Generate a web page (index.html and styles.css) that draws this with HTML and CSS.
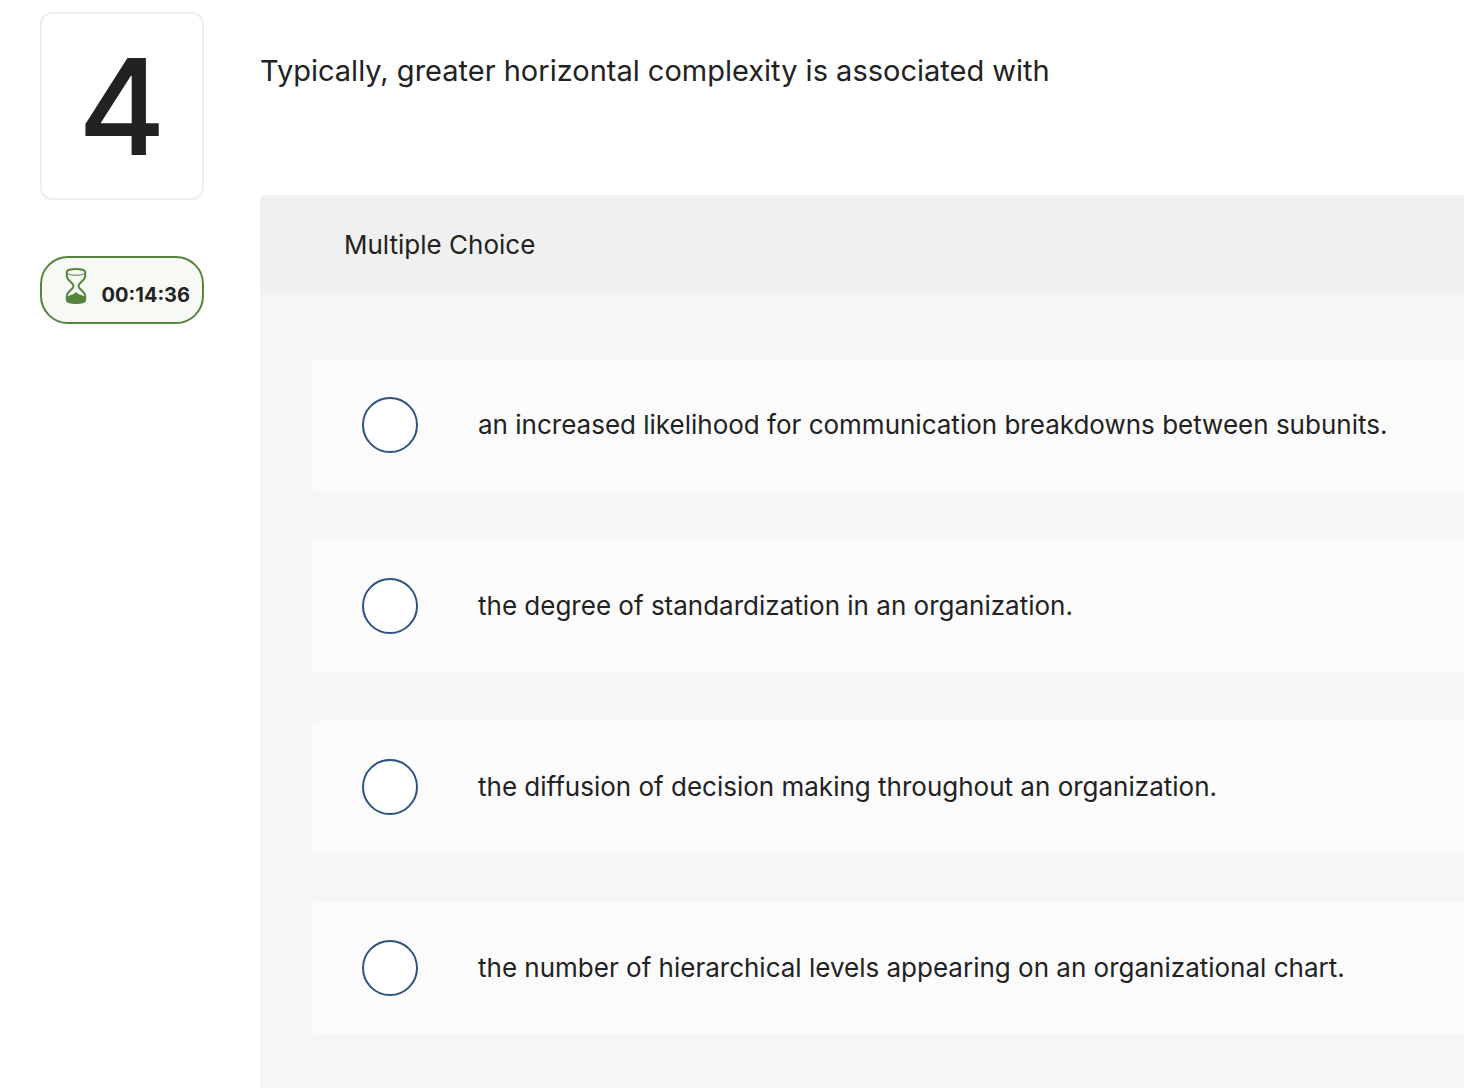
FILE: index.html
```html
<!DOCTYPE html>
<html lang="en">
<head>
<meta charset="utf-8">
<meta name="viewport" content="width=device-width, initial-scale=1">
<title>Question 4</title>
<link rel="stylesheet" href="styles.css">
</head>
<body>
<div class="page">
  <aside class="sidebar">
    <div class="number">4</div>
    <div class="timer" role="timer">
      <svg class="hourglass" viewBox="0 0 24 36" aria-hidden="true">
        <path class="outline" d="M2.8 4C2.8 2.200 7 1 12 1S21.200 2.200 21.200 4V8C21.200 12.500 14.500 14.500 14.500 18S21.200 23.500 21.200 28V32C21.200 34 17 35 12 35S2.800 34 2.800 32V28C2.800 23.500 9.500 21.500 9.500 18S2.800 12.500 2.800 8Z"/>
        <path class="rim" d="M3 5C5 8 19 8 21 5"/>
        <path class="sand" d="M3 29C6 26.500 10.500 27 12 23.500C13.500 27 18 26.500 21 29V32C21 36 3 36 3 32Z"/>
      </svg>
      <span class="time">00:14:36</span>
    </div>
  </aside>
  <main class="question">
    <h1 class="prompt">Typically, greater horizontal complexity is associated with</h1>
    <section class="panel">
      <h2 class="panel-title">Multiple Choice</h2>
      <form class="choices">
        <label class="choice"><input class="radio" type="radio" name="answer"><span>an increased likelihood for communication breakdowns between subunits.</span></label>
        <label class="choice"><input class="radio" type="radio" name="answer"><span>the degree of standardization in an organization.</span></label>
        <label class="choice"><input class="radio" type="radio" name="answer"><span>the diffusion of decision making throughout an organization.</span></label>
        <label class="choice"><input class="radio" type="radio" name="answer"><span>the number of hierarchical levels appearing on an organizational chart.</span></label>
      </form>
    </section>
  </main>
</div>
</body>
</html>
```
FILE: styles.css
```css
* { box-sizing: border-box; }
body {
  margin: 0;
  background: #fff;
  color: #222;
  font-family: Inter, sans-serif;
}
.page {
  display: flex;
  gap: 56px;
  min-height: 100vh;
  padding-left: 40px;
}
.sidebar {
  flex: none;
  width: 164px;
  padding-top: 12px;
}
.number {
  height: 188px;
  border: 2px solid #eee;
  border-radius: 12px;
  font-size: 134px;
  font-weight: 500;
  line-height: 184px;
  text-align: center;
}
.timer {
  display: flex;
  align-items: center;
  justify-content: space-between;
  height: 68px;
  margin-top: 56px;
  padding: 0 12px 0 22px;
  border: 2px solid #55843f;
  border-radius: 28px;
  background: #f6f9f4;
}
.hourglass {
  width: 24px;
  height: 36px;
  margin-bottom: 8px;
}
.outline { fill: none; stroke: #55843f; stroke-width: 2; }
.rim { fill: none; stroke: #55843f; stroke-width: 1; }
.sand { fill: #55843f; }
.time {
  padding-top: 10px;
  font-size: 20px;
  font-weight: 700;
  line-height: 28px;
}
.question {
  display: flex;
  flex: 1;
  flex-direction: column;
  min-width: 0;
}
.prompt {
  margin: 0;
  padding: 51px 0 104px;
  font-size: 29px;
  font-weight: 400;
  line-height: 40px;
}
.panel {
  flex: 1;
  border-top-left-radius: 6px;
  background: #f6f6f6;
}
.panel-title {
  margin: 0;
  padding: 30px 84px;
  border-top-left-radius: 6px;
  background: #f0f0f0;
  font-size: 26px;
  font-weight: 400;
  line-height: 40px;
}
.choices {
  display: grid;
  gap: 49px;
  padding: 64px 0 54px 52px;
}
.choice {
  display: flex;
  gap: 60px;
  align-items: center;
  min-height: 132px;
  padding-left: 50px;
  border-radius: 6px 0 0 6px;
  background: #fbfbfb;
  font-size: 26px;
  line-height: 36px;
}
.radio {
  flex: none;
  width: 56px;
  height: 56px;
  margin: 0;
  border: 2px solid #2c5384;
  border-radius: 50%;
  background: #fff;
  appearance: none;
}
.radio:checked { box-shadow: inset 0 0 0 12px #fff; background: #2c5384; }
```
